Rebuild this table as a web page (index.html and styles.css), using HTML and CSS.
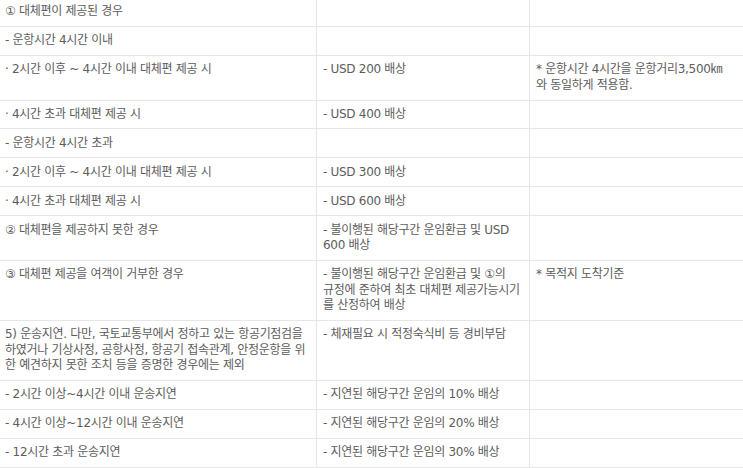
FILE: index.html
```html
<!DOCTYPE html>
<html lang="ko">
<head>
<meta charset="utf-8">
<link rel="stylesheet" href="styles.css">
</head>
<body>
<table class="comp">
  <colgroup><col class="c1"><col class="c2"><col class="c3"></colgroup>
  <tbody>
    <tr><td>① 대체편이 제공된 경우</td><td></td><td></td></tr>
    <tr><td>- 운항시간 4시간 이내</td><td></td><td></td></tr>
    <tr><td>· 2시간 이후 ~ 4시간 이내 대체편 제공 시</td><td>- USD 200 배상</td><td>* 운항시간 4시간을 운항거리3,500㎞<br>와 동일하게 적용함.</td></tr>
    <tr><td>· 4시간 초과 대체편 제공 시</td><td>- USD 400 배상</td><td></td></tr>
    <tr><td>- 운항시간 4시간 초과</td><td></td><td></td></tr>
    <tr><td>· 2시간 이후 ~ 4시간 이내 대체편 제공 시</td><td>- USD 300 배상</td><td></td></tr>
    <tr><td>· 4시간 초과 대체편 제공 시</td><td>- USD 600 배상</td><td></td></tr>
    <tr><td>② 대체편을 제공하지 못한 경우</td><td>- 불이행된 해당구간 운임환급 및 USD<br>600 배상</td><td></td></tr>
    <tr><td>③ 대체편 제공을 여객이 거부한 경우</td><td>- 불이행된 해당구간 운임환급 및 ①의<br>규정에 준하여 최초 대체편 제공가능시기<br>를 산정하여 배상</td><td>* 목적지 도착기준</td></tr>
    <tr><td>5) 운송지연. 다만, 국토교통부에서 정하고 있는 항공기점검을<br>하였거나 기상사정, 공항사정, 항공기 접속관계, 안정운항을 위<br>한 예견하지 못한 조치 등을 증명한 경우에는 제외</td><td>- 체재필요 시 적정숙식비 등 경비부담</td><td></td></tr>
    <tr><td>- 2시간 이상~4시간 이내 운송지연</td><td>- 지연된 해당구간 운임의 10% 배상</td><td></td></tr>
    <tr><td>- 4시간 이상~12시간 이내 운송지연</td><td>- 지연된 해당구간 운임의 20% 배상</td><td></td></tr>
    <tr><td>- 12시간 초과 운송지연</td><td>- 지연된 해당구간 운임의 30% 배상</td><td></td></tr>
  </tbody>
</table>
</body>
</html>
```

FILE: styles.css
```css
html, body {
  margin: 0;
  padding: 0;
  background: #ffffff;
  overflow: hidden;
}

.comp {
  border-collapse: collapse;
  table-layout: fixed;
  width: 750px;
  margin: -3px 0 0 -2px;
  font-family: "DejaVu Sans", "Noto Sans CJK KR", sans-serif;
  font-size: 12px;
  line-height: 15.6px;
  color: #5c5c5c;
}

.c1 { width: 318px; }
.c2 { width: 213px; }
.c3 { width: 219px; }

.comp td {
  border: 1px solid #e6e6e6;
  padding: 6.2px 6px 6.2px 6px;
  vertical-align: top;
  white-space: nowrap;
  letter-spacing: -0.3px;
}
```
